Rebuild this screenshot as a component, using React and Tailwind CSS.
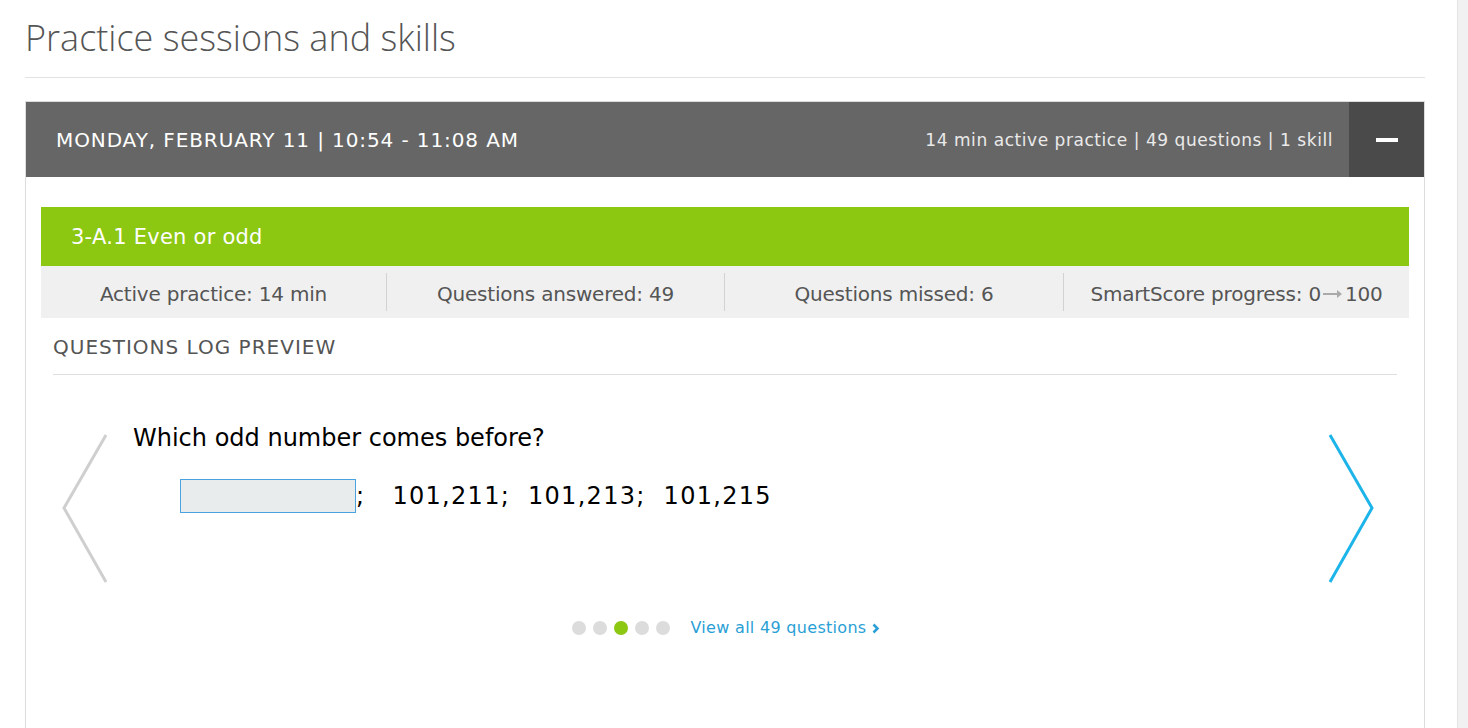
const font = { fontFamily: '"DejaVu Sans", Verdana, sans-serif' };

function Stat({ children, className }) {
  return (
    <div className={"flex items-center justify-center h-full " + className}>
      <div className="text-[20px] text-[#555] tracking-[-0.2px] pt-[3px]">{children}</div>
    </div>
  );
}

export default function App() {
  return (
    <div className="flex w-[1468px] h-[728px] overflow-hidden bg-white" style={font}>
      <div className="flex-1 pl-[25px] pr-[32px]">
        <h1
          className="text-[36px] font-light text-[#555] leading-[44px] pt-[16px] pb-[17px] border-b border-[#e2e2e2]"
          style={{ fontFamily: '"Open Sans", sans-serif' }}
        >
          Practice sessions and skills
        </h1>

        <div className="mt-[23px] border border-[#dcdcdc] border-b-0 h-[700px]">
          <div className="flex h-[75px] bg-[#666666]">
            <div className="flex-1 flex items-center justify-between pl-[30px] pr-[16px]">
              <div className="text-[20px] text-white tracking-[0.9px]">
                MONDAY, FEBRUARY 11 | 10:54 - 11:08 AM
              </div>
              <div className="text-[17px] text-[#eaeaea] tracking-[0.55px] pt-[3px]">
                14 min active practice | 49 questions | 1 skill
              </div>
            </div>
            <div className="w-[75px] bg-[#4a4a4a] flex items-center justify-center">
              <div className="w-[22px] h-[4px] bg-white" />
            </div>
          </div>

          <div className="px-[15px] pt-[30px]">
            <div className="h-[59px] bg-[#8cc712] flex items-center pl-[30px] pt-[3px] text-[21px] text-white tracking-[0.25px]">
              3-A.1 Even or odd
            </div>
            <div className="h-[52px] bg-[#f0f0f0] flex items-center py-[7px]">
              <Stat className="w-[346px] border-r border-[#d2d2d2]">Active practice: 14 min</Stat>
              <Stat className="w-[338px] border-r border-[#d2d2d2]">Questions answered: 49</Stat>
              <Stat className="w-[339px] border-r border-[#d2d2d2]">Questions missed: 6</Stat>
              <Stat className="flex-1">
                <span className="inline-flex items-center">
                  SmartScore progress: 0
                  <svg width="22" height="10" viewBox="0 0 22 10" className="mx-[1px]">
                    <path d="M1 5h17" stroke="#aaa" strokeWidth="2" />
                    <path d="M15 1l5 4-5 4z" fill="#aaa" />
                  </svg>
                  100
                </span>
              </Stat>
            </div>

            <div className="mx-[12px] border-b border-[#dedede] pt-[16px] pb-[14px] text-[20px] text-[#555] leading-[26px] tracking-[1px]">
              QUESTIONS LOG PREVIEW
            </div>

            <div className="flex items-start pt-[47px]">
              <div className="w-[92px] flex justify-end pr-[24px] pt-[11px]">
                <svg width="48" height="152" viewBox="0 0 48 152">
                  <path d="M45 2L3 75l42 74" stroke="#cfcfcf" strokeWidth="3" fill="none" />
                </svg>
              </div>
              <div className="flex-1 text-black text-[24px]">
                <div className="leading-[30px] pt-[1px]">Which odd number comes before?</div>
                <div className="flex items-center mt-[25px] pl-[47px] whitespace-pre">
                  <span className="inline-block w-[176px] h-[34px] bg-[#e8eced] border border-[#4aa3df]" />
                  <span className="tracking-[1.3px]">
                    ;<span className="ml-[27px]">101,211;  101,213;  101,215</span>
                  </span>
                </div>
              </div>
              <div className="w-[82px] flex justify-start pt-[11px]">
                <svg width="48" height="152" viewBox="0 0 48 152">
                  <path d="M3 2l42 73-42 74" stroke="#1db4ea" strokeWidth="3" fill="none" />
                </svg>
              </div>
            </div>

            <div className="flex items-center justify-center gap-[20px] mt-[31px] pl-[2px]">
              <div className="flex gap-[7px]">
                <span className="w-[14px] h-[14px] rounded-full bg-[#dcdcdc]" />
                <span className="w-[14px] h-[14px] rounded-full bg-[#dcdcdc]" />
                <span className="w-[14px] h-[14px] rounded-full bg-[#8cc712]" />
                <span className="w-[14px] h-[14px] rounded-full bg-[#dcdcdc]" />
                <span className="w-[14px] h-[14px] rounded-full bg-[#dcdcdc]" />
              </div>
              <a className="text-[16px] text-[#2a9fd6] tracking-[0.3px] flex items-center gap-[5px]">
                View all 49 questions
                <svg width="8" height="11" viewBox="0 0 8 11">
                  <path d="M1.5 1.5l4 4-4 4" stroke="#2a9fd6" strokeWidth="2.5" fill="none" />
                </svg>
              </a>
            </div>
          </div>
        </div>
      </div>
      <div className="w-[11px] bg-[#f1f1f1] border-l border-[#e4e4e4]" />
    </div>
  );
}
